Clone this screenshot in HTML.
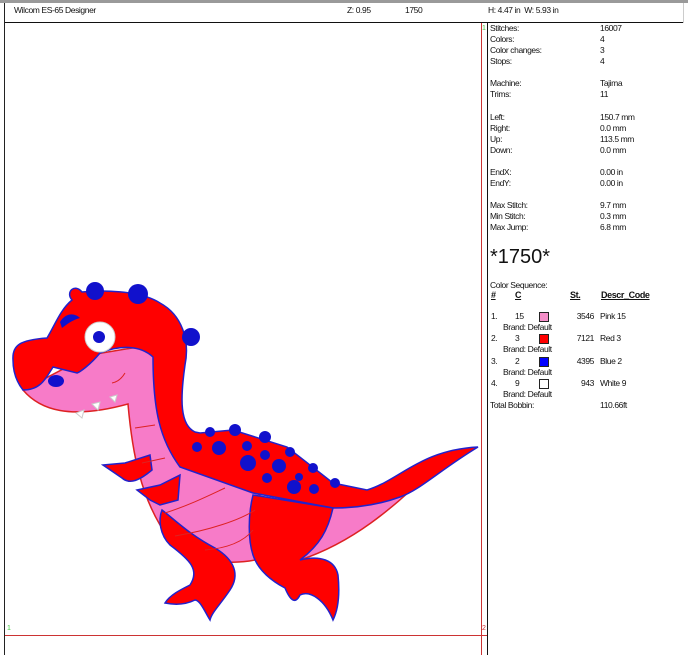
<!DOCTYPE html>
<html><head><meta charset="utf-8"><style>
html,body{margin:0;padding:0;background:#fff;}
body{width:688px;height:655px;position:relative;overflow:hidden;font-family:"Liberation Sans",sans-serif;font-size:8.5px;color:#111;letter-spacing:-0.4px;}
.t{position:absolute;white-space:nowrap;line-height:10px;}
.l{position:absolute;}
</style></head><body>
<div class="l" style="left:0;top:0;width:688px;height:3px;background:#9a9a9a"></div>
<div class="l" style="left:4px;top:3px;width:1px;height:652px;background:#222"></div>
<div class="l" style="left:683px;top:3px;width:1px;height:20px;background:#ccc"></div>
<div class="l" style="left:5px;top:22px;width:678px;height:1px;background:#111"></div>
<div class="t" style="left:14px;top:5px">Wilcom ES-65 Designer</div>
<div class="t" style="left:347px;top:5px">Z: 0.95</div>
<div class="t" style="left:405px;top:5px">1750</div>
<div class="t" style="left:488px;top:5px">H: 4.47 in &nbsp;W: 5.93 in</div>

<div class="l" style="left:481px;top:23px;width:1px;height:632px;background:#c33"></div>
<div class="l" style="left:487px;top:23px;width:1px;height:632px;background:#111"></div>
<div class="l" style="left:5px;top:635px;width:482px;height:1px;background:#c33"></div>
<div class="t" style="left:7px;top:624px;color:#4c4;font-size:7px">1</div>
<div class="t" style="left:482px;top:624px;color:#c33;font-size:7px">2</div>
<div class="t" style="left:482px;top:24px;color:#4c4;font-size:7px">1</div>

<svg class="l" style="left:0;top:0" width="688" height="655" viewBox="0 0 688 655">
<g stroke="#22c" stroke-width="1.5">
<!-- pink body -->
<path fill="#f77bc8" stroke="#d22" d="M23,390 C40,410 70,420 128,404 C132,450 140,500 170,540 C190,562 230,565 255,560 L260,495 L200,468 L180,440 L178,360 L150,345 L90,355 Z"/>
<path fill="#f77bc8" stroke="#d22" d="M300,560 L330,508 L433,470 C400,500 360,540 300,560 Z"/>
<!-- head red -->
<path fill="#f00" d="M13,360 C12,345 20,340 47,338 C55,325 60,310 72,300 C65,292 75,283 82,292 C100,290 140,290 160,303 C182,315 190,340 185,365 C180,400 180,425 195,432 L200,433 L233,430 L287,447 L333,483 L367,490 C400,480 420,450 478,447 C440,470 420,490 400,497 C370,508 340,508 333,508 L253,493 L180,467 C160,440 153,410 153,357 C140,345 120,345 100,353 C90,365 80,372 77,373 L53,367 C45,380 40,390 23,390 C15,380 13,370 13,360 Z"/>
<!-- thigh right -->
<path fill="#f00" d="M253,495 L333,508 C328,530 320,545 300,560 C320,555 335,560 338,575 C340,595 338,610 333,620 C325,600 310,590 300,595 C295,605 290,600 285,588 C270,580 258,570 253,555 C248,540 248,515 253,495 Z"/>
<!-- front leg left -->
<path fill="#f00" d="M162,510 C175,520 190,535 215,548 C235,560 240,575 230,590 C220,605 212,612 210,620 C205,612 200,600 195,600 C185,605 175,605 165,603 C170,595 180,590 190,585 C200,570 190,560 170,545 C160,535 158,520 162,510 Z"/>
<path fill="#f00" d="M103,465 L125,463 L150,455 L152,470 C140,480 130,485 122,478 Z"/>
<path fill="#f00" d="M137,490 L160,485 L180,475 L178,500 L160,505 L150,500 Z"/>
</g>
<!-- belly stripes -->
<g stroke="#d22" fill="none" stroke-width="1">
<path d="M135,428 L155,425"/><path d="M142,463 L165,458"/><path d="M165,513 C190,505 210,495 225,488"/><path d="M175,536 C210,530 240,520 255,510"/><path d="M205,550 C230,548 245,540 253,530"/>
</g>
<!-- eye -->
<circle cx="100" cy="337" r="15" fill="#fff" stroke="#ccc"/>
<circle cx="99" cy="337" r="6" fill="#11c"/>
<path d="M60,322 C66,312 75,313 80,318 C72,320 66,325 62,328 Z" fill="#11c"/>
<ellipse cx="56" cy="381" rx="8" ry="6" fill="#11c"/>
<path d="M112,383 C118,382 122,378 125,373" stroke="#d22" fill="none"/>
<path d="M76,413 L84,410 L82,418 Z M92,404 L100,402 L98,410 Z M110,397 L117,395 L115,402Z" fill="#fff" stroke="#ccc"/>
<!-- blue bumps -->
<g fill="#11c">
<circle cx="95" cy="291" r="9"/><circle cx="138" cy="294" r="10"/><circle cx="191" cy="337" r="9"/>
<circle cx="210" cy="432" r="5"/><circle cx="235" cy="430" r="6"/><circle cx="265" cy="437" r="6"/><circle cx="290" cy="452" r="5"/><circle cx="313" cy="468" r="5"/><circle cx="335" cy="483" r="5"/>
<circle cx="197" cy="447" r="5"/><circle cx="219" cy="448" r="7"/><circle cx="247" cy="446" r="5"/><circle cx="265" cy="455" r="5"/><circle cx="248" cy="463" r="8"/><circle cx="279" cy="466" r="7"/><circle cx="267" cy="478" r="5"/><circle cx="294" cy="487" r="7"/><circle cx="299" cy="477" r="4"/><circle cx="314" cy="489" r="5"/>
</g>
</svg>

<div class="t" style="left:490px;top:23px">Stitches:</div><div class="t" style="left:600px;top:23px">16007</div>
<div class="t" style="left:490px;top:34px">Colors:</div><div class="t" style="left:600px;top:34px">4</div>
<div class="t" style="left:490px;top:45px">Color changes:</div><div class="t" style="left:600px;top:45px">3</div>
<div class="t" style="left:490px;top:56px">Stops:</div><div class="t" style="left:600px;top:56px">4</div>
<div class="t" style="left:490px;top:78px">Machine:</div><div class="t" style="left:600px;top:78px">Tajima</div>
<div class="t" style="left:490px;top:89px">Trims:</div><div class="t" style="left:600px;top:89px">11</div>
<div class="t" style="left:490px;top:112px">Left:</div><div class="t" style="left:600px;top:112px">150.7 mm</div>
<div class="t" style="left:490px;top:123px">Right:</div><div class="t" style="left:600px;top:123px">0.0 mm</div>
<div class="t" style="left:490px;top:134px">Up:</div><div class="t" style="left:600px;top:134px">113.5 mm</div>
<div class="t" style="left:490px;top:145px">Down:</div><div class="t" style="left:600px;top:145px">0.0 mm</div>
<div class="t" style="left:490px;top:167px">EndX:</div><div class="t" style="left:600px;top:167px">0.00 in</div>
<div class="t" style="left:490px;top:178px">EndY:</div><div class="t" style="left:600px;top:178px">0.00 in</div>
<div class="t" style="left:490px;top:200px">Max Stitch:</div><div class="t" style="left:600px;top:200px">9.7 mm</div>
<div class="t" style="left:490px;top:211px">Min Stitch:</div><div class="t" style="left:600px;top:211px">0.3 mm</div>
<div class="t" style="left:490px;top:222px">Max Jump:</div><div class="t" style="left:600px;top:222px">6.8 mm</div>
<div class="t" style="left:490px;top:246px;font-size:20px;line-height:22px;letter-spacing:0">*1750*</div>
<div class="t" style="left:490px;top:280px">Color Sequence:</div>
<div class="t" style="left:491px;top:290px;font-weight:bold;text-decoration:underline;font-size:9px">#</div>
<div class="t" style="left:515px;top:290px;font-weight:bold;text-decoration:underline;font-size:9px">C</div>
<div class="t" style="left:570px;top:290px;font-weight:bold;text-decoration:underline;font-size:9px">St.</div>
<div class="t" style="left:601px;top:290px;font-weight:bold;text-decoration:underline;font-size:9px">Descr_Code</div>

<div class="t" style="left:491px;top:311px">1.</div><div class="t" style="left:515px;top:311px">15</div>
<div class="l" style="left:539px;top:312px;width:8px;height:8px;background:#f58fc9;border:1px solid #222"></div>
<div class="t" style="left:570px;top:311px;width:24px;text-align:right">3546</div><div class="t" style="left:600px;top:311px">Pink 15</div>
<div class="t" style="left:503px;top:322px">Brand: Default</div>
<div class="t" style="left:491px;top:333px">2.</div><div class="t" style="left:515px;top:333px">3</div>
<div class="l" style="left:539px;top:334px;width:8px;height:8px;background:#f00;border:1px solid #222"></div>
<div class="t" style="left:570px;top:333px;width:24px;text-align:right">7121</div><div class="t" style="left:600px;top:333px">Red 3</div>
<div class="t" style="left:503px;top:344px">Brand: Default</div>
<div class="t" style="left:491px;top:356px">3.</div><div class="t" style="left:515px;top:356px">2</div>
<div class="l" style="left:539px;top:357px;width:8px;height:8px;background:#00f;border:1px solid #222"></div>
<div class="t" style="left:570px;top:356px;width:24px;text-align:right">4395</div><div class="t" style="left:600px;top:356px">Blue 2</div>
<div class="t" style="left:503px;top:367px">Brand: Default</div>
<div class="t" style="left:491px;top:378px">4.</div><div class="t" style="left:515px;top:378px">9</div>
<div class="l" style="left:539px;top:379px;width:8px;height:8px;background:#fff;border:1px solid #222"></div>
<div class="t" style="left:570px;top:378px;width:24px;text-align:right">943</div><div class="t" style="left:600px;top:378px">White 9</div>
<div class="t" style="left:503px;top:389px">Brand: Default</div>
<div class="t" style="left:490px;top:400px">Total Bobbin:</div><div class="t" style="left:600px;top:400px">110.66ft</div>
</body></html>
